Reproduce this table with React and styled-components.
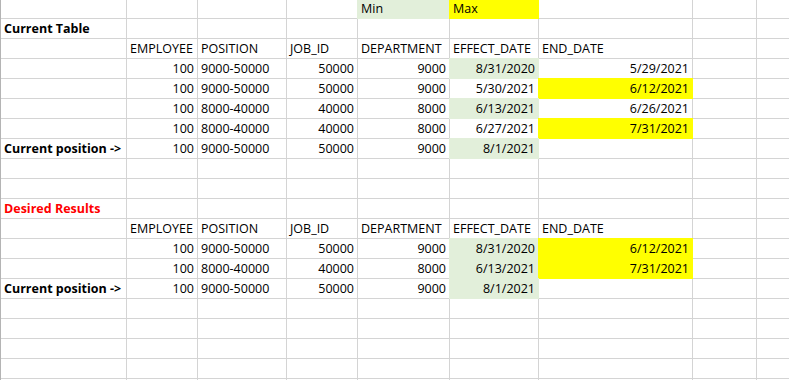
import React from 'react'
import styled, { createGlobalStyle } from 'styled-components';

const GlobalStyle = createGlobalStyle`
    html, body {
        margin: 0;
        padding: 0;
        background: #fff;
    }
`;

const FILLS = {
    green: '#e2efda',
    yellow: '#ffff00',
};

const Sheet = styled.div`
    width: 789px;
    height: 380px;
    overflow: hidden;
    display: grid;
    grid-template-columns: 125px 70px 88px 70px 91px 88px 153px 63px 40px;
    grid-template-rows: 18px;
    grid-auto-rows: 19px;
    gap: 1px;
    background-color: #d4d4d4;
    border-left: 1px solid #b4b4b4;
    box-sizing: border-box;
    font-family: "Open Sans", "Liberation Sans", sans-serif;
    font-size: 12.5px;
    color: #000;
`;

const Cell = styled.div`
    background-color: ${p => p.$fill ? FILLS[p.$fill] : '#fff'};
    box-shadow: ${p => p.$fill ? `0 0 0 1px ${FILLS[p.$fill]}` : 'none'};
    line-height: 19px;
    padding: 0 3px;
    white-space: nowrap;
    overflow: visible;
    text-align: ${p => p.$right ? 'right' : 'left'};
    font-weight: ${p => p.$bold ? 700 : 400};
    color: ${p => p.$red ? '#ff0000' : '#000'};
`;

const TopCell = styled(Cell)`
    line-height: 18px;
`;

const blank = ['', '', '', '', '', '', '', '', ''];

const header = ['', 'EMPLOYEE', 'POSITION', 'JOB_ID', 'DEPARTMENT', 'EFFECT_DATE', 'END_DATE', '', ''];

function dataRow(label, pos, job, dept, eff, end, effFill, endFill) {
    return [
        label ? { t: label, bold: true } : '',
        { t: '100', right: true },
        pos,
        { t: job, right: true },
        { t: dept, right: true },
        { t: eff, right: true, fill: effFill },
        { t: end, right: true, fill: endFill },
        '',
        '',
    ];
}

const rows = [
    [{ t: 'Current Table', bold: true }, '', '', '', '', '', '', '', ''],
    header,
    dataRow('', '9000-50000', '50000', '9000', '8/31/2020', '5/29/2021', 'green'),
    dataRow('', '9000-50000', '50000', '9000', '5/30/2021', '6/12/2021', null, 'yellow'),
    dataRow('', '8000-40000', '40000', '8000', '6/13/2021', '6/26/2021', 'green'),
    dataRow('', '8000-40000', '40000', '8000', '6/27/2021', '7/31/2021', null, 'yellow'),
    dataRow('Current position ->', '9000-50000', '50000', '9000', '8/1/2021', '', 'green'),
    blank,
    blank,
    [{ t: 'Desired Results', bold: true, red: true }, '', '', '', '', '', '', '', ''],
    header,
    dataRow('', '9000-50000', '50000', '9000', '8/31/2020', '6/12/2021', 'green', 'yellow'),
    dataRow('', '8000-40000', '40000', '8000', '6/13/2021', '7/31/2021', 'green', 'yellow'),
    dataRow('Current position ->', '9000-50000', '50000', '9000', '8/1/2021', '', 'green'),
    blank,
    blank,
    blank,
    blank,
    blank,
];

function renderCell(c, key, Comp) {
    if (typeof c === 'string') return <Comp key={key}>{c}</Comp>;
    return (
        <Comp key={key} $fill={c.fill} $right={c.right} $bold={c.bold} $red={c.red}>
            {c.t}
        </Comp>
    );
}

export default function App()
{
    const topRow = ['', '', '', '', { t: 'Min', fill: 'green' }, { t: 'Max', fill: 'yellow' }, '', '', ''];
    return <>
        <GlobalStyle/>
        <Sheet>
            {topRow.map((c, i) => renderCell(c, 'top' + i, TopCell))}
            {rows.map((r, ri) => r.map((c, ci) => renderCell(c, ri + '-' + ci, Cell)))}
        </Sheet>
    </>
}
